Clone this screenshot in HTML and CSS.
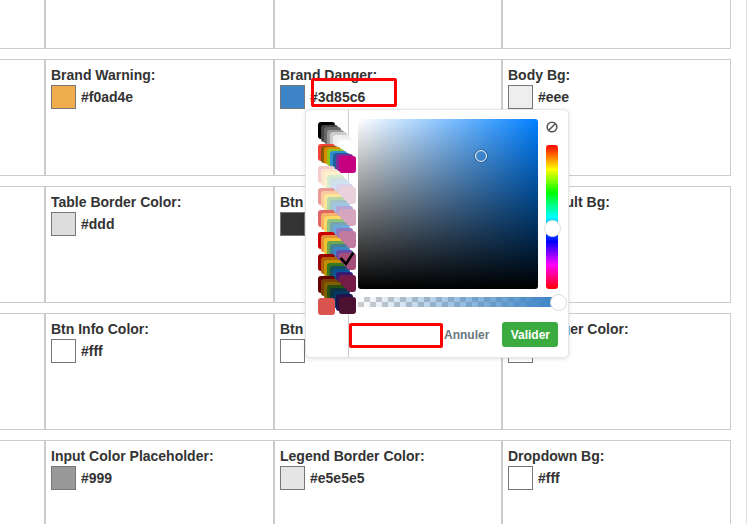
FILE: index.html
```html
<!DOCTYPE html>
<html lang="en">
<head>
    <meta charset="UTF-8">
    <meta name="viewport" content="width=device-width, initial-scale=1.0">
    <title>Theme Colors</title>
    <link rel="stylesheet" href="styles.css">
</head>
<body>
    <div class="page">
        <div class="color-grid">
            <div class="cell cell-clipped"></div>
            <div class="cell"></div>
            <div class="cell"></div>
            <div class="cell"></div>

            <div class="cell cell-side"></div>
            <div class="cell">
                <div class="color-label">Brand Warning:</div>
                <div class="color-value"><span class="color-box box-warning"></span>#f0ad4e</div>
            </div>
            <div class="cell">
                <div class="color-label">Brand Danger:</div>
                <div class="color-value"><span class="color-box box-danger"></span>#3d85c6</div>
            </div>
            <div class="cell">
                <div class="color-label">Body Bg:</div>
                <div class="color-value"><span class="color-box box-eee"></span>#eee</div>
            </div>

            <div class="cell cell-side"></div>
            <div class="cell">
                <div class="color-label">Table Border Color:</div>
                <div class="color-value"><span class="color-box box-ddd"></span>#ddd</div>
            </div>
            <div class="cell">
                <div class="color-label">Btn Default Color:</div>
                <div class="color-value"><span class="color-box box-333"></span>#333</div>
            </div>
            <div class="cell">
                <div class="color-label">Btn Default Bg:</div>
                <div class="color-value"><span class="color-box"></span>#fff</div>
            </div>

            <div class="cell cell-side"></div>
            <div class="cell">
                <div class="color-label">Btn Info Color:</div>
                <div class="color-value"><span class="color-box"></span>#fff</div>
            </div>
            <div class="cell">
                <div class="color-label">Btn Primary Color:</div>
                <div class="color-value"><span class="color-box"></span>#fff</div>
            </div>
            <div class="cell">
                <div class="color-label">Btn Danger Color:</div>
                <div class="color-value"><span class="color-box"></span>#fff</div>
            </div>

            <div class="cell cell-side"></div>
            <div class="cell">
                <div class="color-label">Input Color Placeholder:</div>
                <div class="color-value"><span class="color-box box-999"></span>#999</div>
            </div>
            <div class="cell">
                <div class="color-label">Legend Border Color:</div>
                <div class="color-value"><span class="color-box box-e5"></span>#e5e5e5</div>
            </div>
            <div class="cell">
                <div class="color-label">Dropdown Bg:</div>
                <div class="color-value"><span class="color-box"></span>#fff</div>
            </div>
        </div>

        <div class="mark mark-value"></div>

        <div class="picker">
            <div class="palette" id="palette"></div>
            <div class="picker-main">
                <div class="picker-top">
                    <div class="sv-box">
                        <span class="sv-handle"></span>
                    </div>
                    <div class="hue-col">
                        <svg class="no-color" width="12" height="12" viewBox="0 0 12 12">
                            <circle cx="6" cy="6" r="4.8" fill="none" stroke="#555" stroke-width="1.6"/>
                            <line x1="2.7" y1="9.3" x2="9.3" y2="2.7" stroke="#555" stroke-width="1.6"/>
                        </svg>
                        <div class="hue-bar">
                            <span class="slider-handle hue-handle"></span>
                        </div>
                    </div>
                </div>
                <div class="alpha-bar">
                    <div class="alpha-fill"></div>
                    <span class="slider-handle alpha-handle"></span>
                </div>
                <div class="picker-footer">
                    <div class="mark mark-input"></div>
                    <span class="btn-cancel">Annuler</span>
                    <button class="btn-ok">Valider</button>
                </div>
            </div>
        </div>
    </div>
    <script src="swatches.js"></script>
</body>
</html>
```

FILE: styles.css
```css
html, body {
    margin: 0;
    height: 524px;
    overflow: hidden;
    background: #fff;
}
body {
    font-family: "Liberation Sans", Arial, sans-serif;
    color: #333;
}
.page {
    position: relative;
    height: 524px;
    border-right: 1px solid #e2e2e2;
    overflow: hidden;
}
.color-grid {
    display: grid;
    grid-template-columns: 45px 229px 228px 229px;
    grid-template-rows: 49px repeat(4, 117px);
    row-gap: 10px;
}
.cell {
    border: 1px solid #ccc;
    border-top: 0;
    padding: 0 5px;
}
.cell-clipped,
.cell-side {
    border-left: 0;
}
.cell-side,
.color-grid .cell:nth-child(n+5) {
    border-top: 1px solid #ccc;
}
.color-label {
    margin-top: 6px;
    font-size: 14px;
    font-weight: bold;
    line-height: 19px;
}
.color-value {
    display: flex;
    align-items: center;
    gap: 5px;
    font-size: 14px;
    font-weight: bold;
}
.color-box {
    width: 23px;
    height: 22px;
    border: 1px solid #777;
    background: #fff;
}
.box-warning { background: #f0ad4e; }
.box-danger { background: #3d85c6; }
.box-eee { background: #eee; }
.box-ddd { background: #ddd; }
.box-333 { background: #333; }
.box-999 { background: #999; }
.box-e5 { background: #e5e5e5; }

.mark {
    position: absolute;
    border: 3px solid #f00;
    border-radius: 2px;
    box-sizing: border-box;
}
.mark-value {
    left: 311px;
    top: 78px;
    width: 86px;
    height: 29px;
}
.mark-input {
    left: 0;
    top: 1px;
    width: 94px;
    height: 25px;
}

.picker {
    position: absolute;
    left: 305px;
    top: 109px;
    width: 264px;
    height: 249px;
    box-sizing: border-box;
    display: flex;
    background: #fff;
    border: 1px solid #e6e6e6;
    border-radius: 5px;
    box-shadow: 0 1px 4px rgba(0, 0, 0, 0.12);
}
.palette {
    width: 43px;
    box-sizing: border-box;
    padding: 12px 0 0 12px;
    border-right: 1px solid #ccc;
}
.palette-row {
    position: relative;
    height: 22px;
}
.swatch {
    position: absolute;
    width: 17px;
    height: 17px;
    border-radius: 3px;
}
.swatch-check {
    position: absolute;
    z-index: 1;
    left: 21px;
    top: 19px;
}
.picker-main {
    padding: 9px 9px 0 9px;
}
.picker-top {
    display: flex;
    gap: 8px;
}
.sv-box {
    position: relative;
    width: 180px;
    height: 170px;
    border-radius: 3px;
    background: linear-gradient(to top, #000, transparent), linear-gradient(to right, #fff, #0080ff);
}
.sv-handle {
    position: absolute;
    left: 117px;
    top: 31px;
    width: 10px;
    height: 10px;
    border: 1px solid #fff;
    border-radius: 50%;
    outline: 1px solid rgba(0, 0, 0, 0.25);
    outline-offset: 0;
}
.hue-col {
    width: 12px;
    display: flex;
    flex-direction: column;
    align-items: center;
}
.no-color {
    margin: 2px 0 12px;
}
.hue-bar {
    position: relative;
    width: 12px;
    height: 144px;
    border-radius: 3px;
    background: linear-gradient(to bottom, #f00, #ff0 17%, #0f0 33%, #0ff 50%, #00f 67%, #f0f 83%, #f00);
}
.slider-handle {
    position: absolute;
    width: 15px;
    height: 15px;
    background: #fff;
    border: 1px solid #ddd;
    border-radius: 50%;
}
.hue-handle {
    left: -2.5px;
    top: 75px;
}
.alpha-bar {
    position: relative;
    width: 195px;
    height: 10px;
    margin-top: 8px;
    background: repeating-conic-gradient(#ccc 0 25%, #fff 0 50%) 0 0 / 12px 10px;
}
.alpha-fill {
    height: 100%;
    background: linear-gradient(to right, rgba(61, 133, 198, 0), #3d85c6);
}
.alpha-handle {
    left: 192px;
    top: -3px;
}
.picker-footer {
    position: relative;
    display: flex;
    align-items: center;
    margin: 15px 0 0 -9px;
    padding-left: 95px;
    height: 25px;
}
.btn-cancel {
    font-size: 12px;
    font-weight: bold;
    color: #6c757d;
}
.btn-ok {
    margin-left: 13px;
    width: 56px;
    height: 25px;
    padding: 0;
    border: 0;
    border-radius: 3px;
    background: #3cab3f;
    color: #fff;
    font-family: inherit;
    font-size: 12px;
    font-weight: bold;
}
```

FILE: swatches.js
```js
// palette rows, same order as the picker shows them
var rows = [
    ["#000", "#444", "#666", "#999", "#ccc", "#eee", "#f3f3f3", "#fff"],
    ["#f44336", "#8b5a00", "#d98b00", "#8fc31f", "#2f8fce", "#1f5f99", "#7b2d9e", "#c7007f"],
    ["#f4cccc", "#fce5cd", "#fff2cc", "#d9ead3", "#d0e0e3", "#cfe2f3", "#d9d2e9", "#ead1dc"],
    ["#ea9999", "#f9cb9c", "#ffe599", "#b6d7a8", "#a2c4c9", "#9fc5e8", "#b4a7d6", "#d5a6bd"],
    ["#e06666", "#f6b26b", "#ffd966", "#93c47d", "#76a5af", "#6fa8dc", "#8e7cc3", "#c27ba0"],
    ["#cc0000", "#e69138", "#f1c232", "#6aa84f", "#45818e", "#3d85c6", "#674ea7", "#a64d79"],
    ["#990000", "#b45f06", "#bf9000", "#38761d", "#134f5c", "#0b5394", "#351c75", "#741b47"],
    ["#660000", "#783f04", "#7f6000", "#274e13", "#0c343d", "#073763", "#20124d", "#4c1130"],
    ["#d9534f"]
];
var stepY = [2.6, 1.7, 3, 3, 3, 3, 3, 3, 0];
var palette = document.getElementById('palette');

rows.forEach(function (colors, r) {
    var row = document.createElement('div');
    row.className = 'palette-row';
    colors.forEach(function (color, i) {
        var swatch = document.createElement('span');
        swatch.className = 'swatch';
        swatch.style.background = color;
        swatch.style.left = (i * 3) + 'px';
        swatch.style.top = (i * stepY[r]) + 'px';
        row.appendChild(swatch);
    });
    if (r === 5) {
        row.insertAdjacentHTML('beforeend',
            '<svg class="swatch-check" width="16" height="16" viewBox="0 0 16 16"><path d="M1.5 7 L7 13 L14.5 1.5" fill="none" stroke="#000" stroke-width="2.6"/></svg>');
    }
    palette.appendChild(row);
});
```
